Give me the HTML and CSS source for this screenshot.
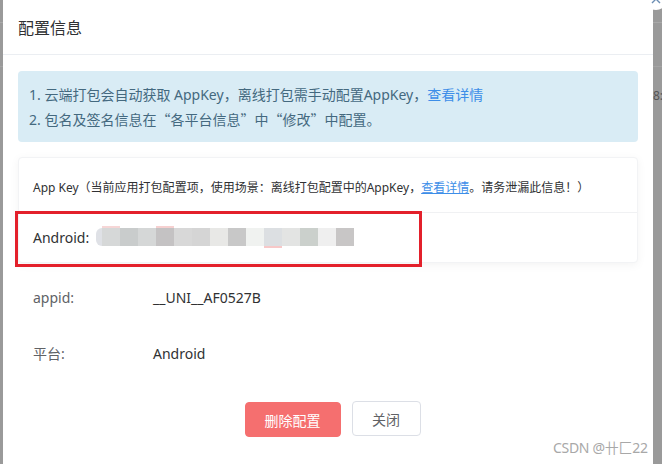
FILE: index.html
```html
<!DOCTYPE html>
<html lang="zh-CN">
<head>
<meta charset="utf-8">
<title>配置信息</title>
<link rel="stylesheet" href="styles.css">
</head>
<body>
<div class="page">
  <div class="dialog">
    <div class="dialog-header">
      <span class="dialog-title">配置信息</span>
    </div>
    <div class="dialog-body">
      <div class="alert">
        <p class="alert-line">1. 云端打包会自动获取 AppKey，离线打包需手动配置AppKey，<a class="link">查看详情</a></p>
        <p class="alert-line">2. 包名及签名信息在<span class="cjk">“</span>各平台信息<span class="cjk">”</span>中<span class="cjk">“</span>修改<span class="cjk">”</span>中配置。</p>
      </div>
      <div class="card">
        <div class="card-header">App Key（当前应用打包配置项，使用场景：离线打包配置中的AppKey，<a class="link underline">查看详情</a>。请务泄漏此信息！）</div>
        <div class="card-body">
          <span class="card-label">Android:</span>
          <span class="mosaic">
            <i class="m m0"></i><i class="m m1"></i><i class="m m2"></i><i class="m m3"></i><i class="m m4"></i><i class="m m5"></i><i class="m m6"></i><i class="m m7"></i><i class="m m8"></i><i class="m m9"></i><i class="m m10"></i><i class="m m11"></i><i class="m m12"></i><i class="m m13"></i><i class="m m14"></i>
          </span>
        </div>
        <div class="highlight"></div>
      </div>
      <div class="info-row">
        <span class="info-label">appid:</span>
        <span class="info-value">__UNI__AF0527B</span>
      </div>
      <div class="info-row">
        <span class="info-label">平台:</span>
        <span class="info-value">Android</span>
      </div>
      <div class="footer">
        <button class="btn btn-danger">删除配置</button>
        <button class="btn btn-default">关闭</button>
      </div>
    </div>
    <svg class="close" width="24" height="24" viewBox="0 0 24 24">
      <circle cx="12" cy="12" r="11" fill="#ffffff"/>
      <path d="M8 8 L16 16 M16 8 L8 16" stroke="#6b8db3" stroke-width="1.4" fill="none"/>
    </svg>
  </div>
  <div class="side-text">8:</div>
  <div class="watermark">CSDN @卄匚22</div>
</div>
</body>
</html>
```
FILE: styles.css
```css
* { box-sizing: border-box; }
html, body { margin: 0; padding: 0; }
body {
  width: 662px;
  height: 464px;
  overflow: hidden;
  background-color: #9a9a9a;
  background-image:
    linear-gradient(to bottom, transparent 22px, #a9a9a9 22px, #a9a9a9 23px, transparent 23px),
    linear-gradient(to bottom, transparent 66px, #a4a4a4 66px, #a4a4a4 67px, transparent 67px);
  font-family: "Noto Sans", "Noto Sans CJK SC", sans-serif;
}
.page {
  position: relative;
  width: 662px;
  height: 464px;
}
.dialog {
  position: relative;
  margin-left: 3px;
  width: 650px;
  height: 464px;
  background: #ffffff;
}
.dialog-header {
  height: 55px;
  border-bottom: 1px solid #ebeef2;
  padding-left: 15px;
  display: flex;
  align-items: center;
  padding-bottom: 1px;
}
.dialog-title {
  font-size: 16px;
  color: #303133;
}
.dialog-body {
  padding: 16px 15px 0 15px;
}
.alert {
  background: #d9ecf5;
  border-radius: 4px;
  padding: 11px 12px 10px 11px;
  height: 71px;
}
.alert-line {
  margin: 0;
  font-size: 14px;
  line-height: 25px;
  color: #44697f;
  white-space: nowrap;
}
.cjk {
  font-family: "Noto Sans CJK SC", sans-serif;
}
.link {
  color: #3d8ee8;
  cursor: pointer;
}
.underline { text-decoration: underline; }
.card {
  position: relative;
  margin-top: 15px;
  height: 106px;
  border: 1px solid #f2f3f5;
  border-radius: 4px;
  box-shadow: 0 2px 10px rgba(0, 0, 0, 0.05);
  background: #fff;
}
.card-header {
  height: 55px;
  border-bottom: 1px solid #f0f1f3;
  padding-left: 14px;
  display: flex;
  align-items: center;
  padding-top: 4px;
  font-size: 12px;
  color: #303133;
  white-space: nowrap;
}
.card-body {
  height: 49px;
  display: flex;
  align-items: center;
  padding-left: 14px;
  padding-bottom: 1px;
}
.card-label {
  font-size: 14px;
  color: #303133;
}
.mosaic {
  display: flex;
  margin-left: 7px;
  height: 18px;
}
.m { display: block; width: 18px; height: 18px; }
.m0 { width: 6px; background: #dfe1e6; border-radius: 6px 0 0 6px; }
.m1 { background: #d6d8d8; box-shadow: 0 -2px 0 #f6d6d6; }
.m2 { background: #c9cccc; }
.m3 { background: #d5d7d7; }
.m4 { background: #c4c2c3; box-shadow: 0 -2px 0 #f6d0d0; }
.m5 { background: #d8d8d8; }
.m6 { background: #d5d5d5; }
.m7 { background: #e8e8e6; }
.m8 { background: #c8c8c8; }
.m9 { background: #f0f2f0; }
.m10 { background: #dcdfe2; box-shadow: 0 2px 0 #f7c8c8; }
.m11 { background: #e3e4e3; }
.m12 { background: #cbd0cc; }
.m13 { background: #efefef; }
.m14 { background: #c8c6c6; }
.highlight {
  position: absolute;
  left: -4px;
  top: 53px;
  width: 407px;
  height: 56px;
  border: 3px solid #e3202b;
}
.info-row {
  height: 56px;
  display: flex;
  align-items: center;
  padding-left: 15px;
  font-size: 14px;
}
.card + .info-row { margin-top: 6px; }
.info-label {
  width: 120px;
  color: #606266;
}
.info-value {
  color: #303133;
}
.footer {
  margin-top: 21px;
  display: flex;
  justify-content: center;
  gap: 11px;
  padding-left: 9px;
}
.btn {
  height: 35px;
  border-radius: 4px;
  font-size: 14px;
  font-family: "Noto Sans CJK SC", sans-serif;
  padding: 0;
}
.btn-danger {
  width: 96px;
  background: #f56f6f;
  border: 1px solid #f56f6f;
  color: #ffffff;
}
.btn-default {
  width: 69px;
  background: #ffffff;
  border: 1px solid #dcdfe6;
  color: #606266;
  margin-top: -1px;
}
.close {
  position: absolute;
  left: 641px;
  top: -13px;
}
.side-text {
  position: absolute;
  left: 653px;
  top: 87px;
  font-size: 12px;
  color: #555;
}
.watermark {
  position: absolute;
  left: 553px;
  top: 437px;
  font-size: 14px;
  color: #a8a8a8;
  font-family: "Noto Sans", "Noto Sans CJK SC", sans-serif;
  letter-spacing: -0.3px;
}
```
